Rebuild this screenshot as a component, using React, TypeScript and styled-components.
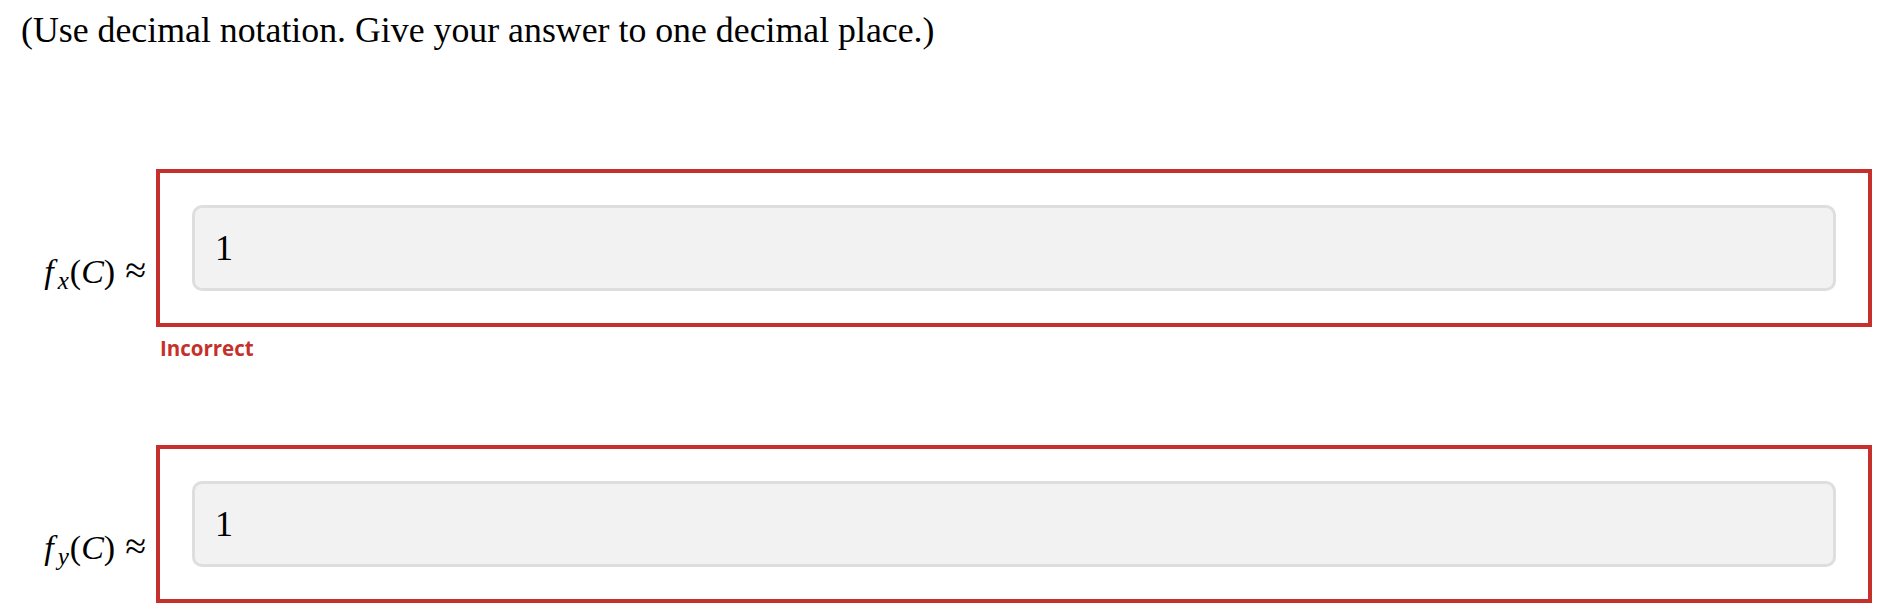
import styled, { createGlobalStyle } from "styled-components"

const GlobalStyle = createGlobalStyle`
	html, body {
		margin: 0;
		padding: 0;
		background: #ffffff;
	}

	* {
		box-sizing: border-box;
	}
`

const FIELDS = [
	{ sub: "x", value: "1", incorrect: true },
	{ sub: "y", value: "1", incorrect: false },
]

const App: React.FC = () => {
	return (
		<>
			<GlobalStyle />
			<Page>
				<Instructions>(Use decimal notation. Give your answer to one decimal place.)</Instructions>

				{FIELDS.map((field, index) => (
					<Field key={index} $first={index === 0}>
						<Row>
							<Label>
								<MathVar>f</MathVar>
								<Sub>{field.sub}</Sub>
								<span>(</span>
								<MathVar>C</MathVar>
								<span>)</span>
								<Relation>≈</Relation>
							</Label>

							<AnswerBox>
								<Input type="text" defaultValue={field.value} readOnly />
							</AnswerBox>
						</Row>

						{field.incorrect && <Feedback>Incorrect</Feedback>}
					</Field>
				))}
			</Page>
		</>
	)
}

export default App

const Page = styled.main`
	padding: 10px 10px 13px 21px;
	font-family: "Liberation Serif", "Times New Roman", serif;
	color: #000000;
`

const Instructions = styled.p`
	margin: 0;
	font-size: 35.8px;
	line-height: 40px;
`

const Field = styled.section<{ $first: boolean }>`
	margin-top: ${({ $first }) => ($first ? "119px" : "83px")};
`

const Row = styled.div`
	display: flex;
	align-items: flex-end;
	gap: 10px;
	margin-left: -21px;
`

const Label = styled.div`
	width: 146px;
	margin-bottom: 35px;
	text-align: right;
	font-family: "Liberation Serif", "Times New Roman", serif;
	font-size: 34px;
	line-height: 40px;
	white-space: nowrap;
`

const MathVar = styled.i`
	font-style: italic;
`

const Sub = styled.sub`
	font-style: italic;
	font-size: 25px;
	vertical-align: -6px;
	line-height: 0;
	margin-left: 4px;
	margin-right: 1px;
`

const Relation = styled.span`
	margin-left: 10px;
	font-size: 38px;
	line-height: 0;
`

const AnswerBox = styled.div`
	flex: 1;
	padding: 32px;
	border: 4px solid #c6302c;
`

const Input = styled.input`
	display: block;
	width: 100%;
	height: 86px;
	padding: 0 20px;
	border: 3px solid #dedede;
	border-radius: 10px;
	background: #f2f2f2;
	font-family: "Liberation Serif", "Times New Roman", serif;
	font-size: 36px;
	color: #000000;
	outline: none;
`

const Feedback = styled.div`
	margin: 7px 0 0 139px;
	font-family: "Open Sans", "Liberation Sans", sans-serif;
	font-weight: 700;
	font-size: 20.5px;
	line-height: 28px;
	color: #c6302c;
`
